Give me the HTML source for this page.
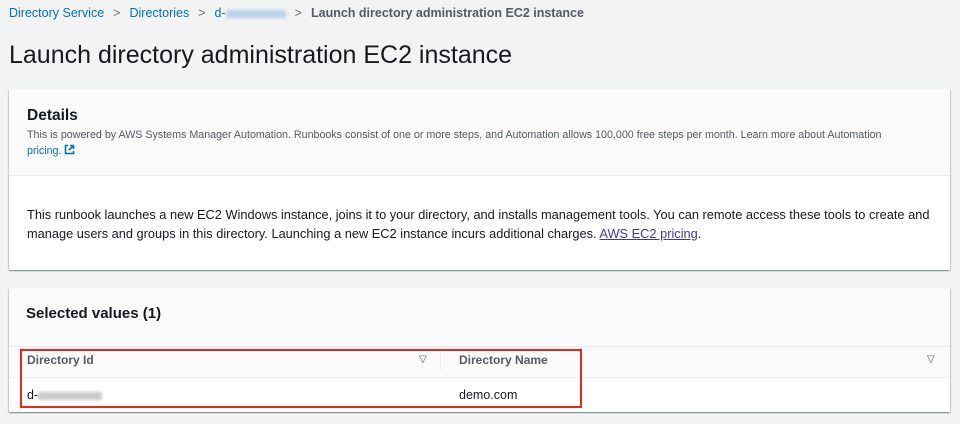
<!DOCTYPE html>
<html><head><style>
body{margin:0;width:960px;height:424px;background:#f2f3f3;font-family:"Liberation Sans",sans-serif;color:#16191f;position:relative;overflow:hidden}
.a{position:absolute;white-space:nowrap}
.l{color:#0073bb}
.card{position:absolute;left:9px;width:941px;background:#fff;box-shadow:0 1px 1px rgba(0,28,36,.3),1px 1px 1px rgba(0,28,36,.15),-1px 1px 1px rgba(0,28,36,.15)}
.blur{display:inline-block;width:60px;height:8px;background:#b9d2ea;filter:blur(1.5px);vertical-align:middle}
</style></head><body>
<div class="a" style="left:9px;top:6px;font-size:12.5px"><span class="l">Directory Service</span><span style="color:#687078;margin:0 9px">&gt;</span><span class="l">Directories</span><span style="color:#687078;margin:0 9px">&gt;</span><span class="l">d-</span><span class="blur"></span><span style="color:#687078;margin:0 9px">&gt;</span><span style="color:#545b64;font-weight:bold">Launch directory administration EC2 instance</span></div>
<div class="a" style="left:9px;top:41px;font-size:25px">Launch directory administration EC2 instance</div>
<div class="card" style="top:89px;height:181px">
 <div style="background:#fafafa;height:86px;border-bottom:1px solid #eaeded"></div>
 <div class="a" style="left:18px;top:18px;font-size:15.5px;font-weight:bold">Details</div>
 <div class="a" style="left:18px;top:40px;font-size:10.7px;color:#545b64">This is powered by AWS Systems Manager Automation. Runbooks consist of one or more steps, and Automation allows 100,000 free steps per month. Learn more about Automation</div>
 <div class="a" style="left:18px;top:55px;font-size:10.7px" ><span class="l">pricing.</span> <svg width="11" height="11" viewBox="0 0 11 11" style="vertical-align:-1px"><path d="M4 1.5H1.5v8h8V7M6 1.5h3.5V5M9.5 1.5 5 6" fill="none" stroke="#0073bb" stroke-width="1.6"/></svg></div>
 <div class="a" style="left:18px;top:116px;font-size:12.8px;line-height:19px;white-space:normal;width:925px">This runbook launches a new EC2 Windows instance, joins it to your directory, and installs management tools. You can remote access these tools to create and manage users and groups in this directory. Launching a new EC2 instance incurs additional charges. <span style="color:#44379a;text-decoration:underline">AWS EC2 pricing</span>.</div>
</div>
<div class="card" style="top:288px;height:124px">
 <div style="background:#fafafa;height:58px;border-bottom:1px solid #eaeded"></div>
 <div style="background:#fafafa;height:30px;border-bottom:1px solid #eaeded"></div>
 <div class="a" style="left:17px;top:17px;font-size:15px;font-weight:bold">Selected values (1)</div>
 <div class="a" style="left:18px;top:65px;font-size:12px;font-weight:bold;color:#545b64">Directory Id</div>
 <div class="a" style="left:410px;top:66px;font-size:10px;color:#545b64">▽</div>
 <div class="a" style="left:431px;top:62px;width:1px;height:20px;background:#eaeded"></div>
 <div class="a" style="left:450px;top:65px;font-size:12px;font-weight:bold;color:#545b64">Directory Name</div>
 <div class="a" style="left:918px;top:66px;font-size:10px;color:#545b64">▽</div>
 <div class="a" style="left:18px;top:100px;font-size:12.5px">d-<span class="blur" style="background:#c8c8c8;width:64px"></span></div>
 <div class="a" style="left:450px;top:100px;font-size:12.5px">demo.com</div>
</div>
<div class="a" style="left:20px;top:349px;width:558px;height:55px;border:2px solid #e8281c"></div>
</body></html>
